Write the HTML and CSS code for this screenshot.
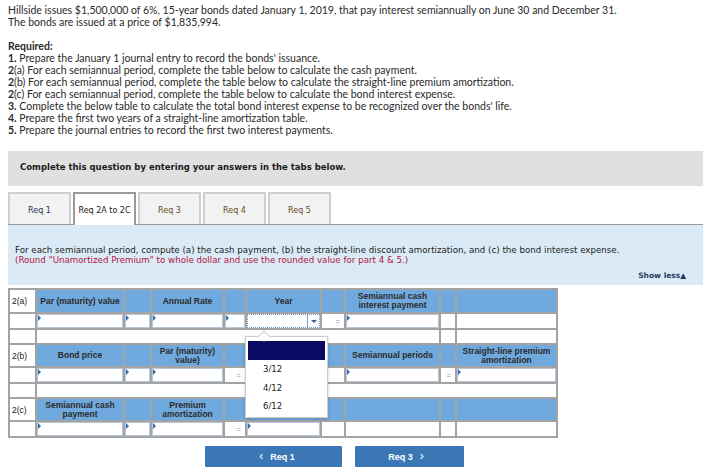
FILE: index.html
```html
<!DOCTYPE html>
<html>
<head>
<meta charset="utf-8">
<link rel="stylesheet" href="styles.css">
</head>
<body>
<div class="intro">
  <p class="line">Hillside issues $1,500,000 of 6%, 15-year bonds dated January 1, 2019, that pay interest semiannually on June 30 and December 31.</p>
  <p class="line">The bonds are issued at a price of $1,835,994.</p>
</div>
<div class="required">
  <p class="line"><b>Required:</b></p>
  <p class="line"><b>1.</b> Prepare the January 1 journal entry to record the bonds' issuance.</p>
  <p class="line"><b>2</b>(a) For each semiannual period, complete the table below to calculate the cash payment.</p>
  <p class="line"><b>2</b>(b) For each semiannual period, complete the table below to calculate the straight-line premium amortization.</p>
  <p class="line"><b>2</b>(c) For each semiannual period, complete the table below to calculate the bond interest expense.</p>
  <p class="line"><b>3.</b> Complete the below table to calculate the total bond interest expense to be recognized over the bonds' life.</p>
  <p class="line"><b>4.</b> Prepare the first two years of a straight-line amortization table.</p>
  <p class="line"><b>5.</b> Prepare the journal entries to record the first two interest payments.</p>
</div>

<div class="banner">Complete this question by entering your answers in the tabs below.</div>

<div class="tabs">
  <div class="tab done">Req 1</div>
  <div class="tab active">Req 2A to 2C</div>
  <div class="tab">Req 3</div>
  <div class="tab">Req 4</div>
  <div class="tab">Req 5</div>
</div>

<div class="panel">
  <p class="inst">For each semiannual period, compute (a) the cash payment, (b) the straight-line discount amortization, and (c) the bond interest expense.</p>
  <p class="inst red">(Round "Unamortized Premium" to whole dollar and use the rounded value for part 4 &amp; 5.)</p>
  <div class="showless">Show less&#9650;</div>
</div>

<div class="tablewrap">
  <table class="grid">
    <colgroup>
      <col class="w-lab"><col class="w-c1"><col class="w-c2"><col class="w-c3"><col class="w-c4"><col class="w-c5"><col class="w-c6"><col class="w-c7"><col class="w-c8"><col class="w-c9">
    </colgroup>
    <tr class="hrow">
      <td class="lab">2(a)</td>
      <th>Par (maturity) value</th>
      <th></th>
      <th>Annual Rate</th>
      <th></th>
      <th>Year</th>
      <th></th>
      <th>Semiannual cash<br>interest payment</th>
      <th></th>
      <th></th>
    </tr>
    <tr class="irow">
      <td></td>
      <td><div class="inp"></div></td>
      <td><div class="inp"></div></td>
      <td><div class="inp"></div></td>
      <td><div class="inp"></div></td>
      <td class="selcell"><div class="sel"><span class="arrow"></span></div></td>
      <td class="eq">=</td>
      <td><div class="inp"></div></td>
      <td></td>
      <td></td>
    </tr>
    <tr class="srow">
      <td></td>
      <td colspan="7"></td>
      <td></td>
      <td></td>
    </tr>
    <tr class="hrow">
      <td class="lab">2(b)</td>
      <th>Bond price</th>
      <th></th>
      <th>Par (maturity)<br>value)</th>
      <th></th>
      <th></th>
      <th></th>
      <th>Semiannual periods</th>
      <th></th>
      <th>Straight-line premium<br>amortization</th>
    </tr>
    <tr class="irow">
      <td></td>
      <td><div class="inp"></div></td>
      <td><div class="inp"></div></td>
      <td><div class="inp"></div></td>
      <td class="eq">=</td>
      <td></td>
      <td></td>
      <td><div class="inp"></div></td>
      <td class="eq">=</td>
      <td><div class="inp"></div></td>
    </tr>
    <tr class="srow">
      <td></td>
      <td colspan="9"></td>
    </tr>
    <tr class="hrow">
      <td class="lab">2(c)</td>
      <th>Semiannual cash<br>payment</th>
      <th></th>
      <th>Premium<br>amortization</th>
      <th></th>
      <th></th>
      <th></th>
      <th></th>
      <th></th>
      <th></th>
    </tr>
    <tr class="irow">
      <td></td>
      <td><div class="inp"></div></td>
      <td><div class="inp"></div></td>
      <td><div class="inp"></div></td>
      <td class="eq">=</td>
      <td><div class="inp"></div></td>
      <td></td>
      <td></td>
      <td></td>
      <td></td>
    </tr>
  </table>

  <div class="popup">
    <div class="opt hl"></div>
    <div class="opt">3/12</div>
    <div class="opt">4/12</div>
    <div class="opt">6/12</div>
  </div>
</div>

<div class="nav">
  <div class="btn prev"><span class="chev">&#8249;</span> Req 1</div>
  <div class="btn next">Req 3 <span class="chev">&#8250;</span></div>
</div>
</body>
</html>
```

FILE: styles.css
```css
html, body {
  margin: 0;
  padding: 0;
  background: #fff;
}
body {
  padding: 4px 7px 0 8px;
  font-family: "Lato", "Liberation Sans", sans-serif;
  color: #2a2a2a;
}
.line {
  margin: 0;
  font-size: 10.5px;
  line-height: 12px;
  white-space: nowrap;
}
.required {
  margin-top: 12px;
}
.banner {
  margin-top: 15px;
  height: 35px;
  box-sizing: border-box;
  padding: 10px 12px 0;
  background: #e0e0e0;
  font-family: "DejaVu Sans", Verdana, sans-serif;
  font-weight: bold;
  font-size: 8.5px;
  line-height: 12px;
  color: #1a1a1a;
}
.tabs {
  display: flex;
  gap: 2px;
  margin-top: 6px;
  height: 32px;
}
.tab {
  width: 63px;
  box-sizing: border-box;
  border: 2px solid #cfcfcf;
  border-bottom: none;
  background: #f2f2f2;
  font-family: "DejaVu Sans", Verdana, sans-serif;
  font-size: 8px;
  display: flex;
  align-items: center;
  justify-content: center;
  color: #6a4a24;
  padding-top: 2px;
}
.tab.done {
  color: #2b3550;
}
.tab.active {
  background: #fff;
  border-color: #9a9a9a;
  color: #1a1a1a;
  position: relative;
  z-index: 1;
  margin-bottom: -1px;
  height: 33px;
}
.panel {
  background: #daebf7;
  border-top: 1px solid #9a9a9a;
  height: 61px;
  box-sizing: border-box;
  padding: 20px 17px 0 7px;
  font-family: "DejaVu Sans", Verdana, sans-serif;
  font-size: 8.7px;
  color: #222;
}
.inst {
  margin: 0;
  line-height: 10px;
  white-space: nowrap;
}
.inst.red {
  color: #b5123e;
}
.showless {
  text-align: right;
  font-weight: bold;
  color: #1e3b5a;
  font-size: 7.5px;
  line-height: 10px;
  margin-top: 6px;
}
.tablewrap {
  position: relative;
  margin-top: 3px;
  width: 549px;
}
.grid {
  border-collapse: collapse;
  table-layout: fixed;
  width: 549px;
  font-family: "Liberation Sans", Arial, sans-serif;
}
.w-lab { width: 27px; }
.w-c1 { width: 88px; }
.w-c2 { width: 27px; }
.w-c3 { width: 73px; }
.w-c4 { width: 22px; }
.w-c5 { width: 75px; }
.w-c6 { width: 24px; }
.w-c7 { width: 95px; }
.w-c8 { width: 16px; }
.w-c9 { width: 101px; }
.grid td, .grid th {
  border: 2px solid #a3a3a3;
  padding: 0;
  background: #fff;
}
.grid th {
  background: #70a9de;
  font-weight: bold;
  font-size: 8.5px;
  line-height: 9px;
  color: #2b2b2b;
  text-align: center;
  vertical-align: middle;
}
.hrow { height: 23px; }
.hrow:first-child { height: 24px; }
.irow { height: 16px; }
.srow { height: 15px; }
.lab {
  font-size: 8.5px;
  color: #222;
  padding-left: 2px !important;
  vertical-align: middle;
}
.inp {
  height: 14px;
  box-sizing: border-box;
  border: 1px solid #b8c8d8;
  position: relative;
  margin: 0;
}
.inp::before {
  content: "";
  position: absolute;
  left: 0;
  top: 0;
  border-top: 3px solid transparent;
  border-bottom: 3px solid transparent;
  border-left: 3px solid #2f6fb5;
}
.eq {
  text-align: right;
  font-size: 8px;
  color: #9a9a9a;
  padding-right: 4px !important;
}
.selcell {
  background: #fff;
}
.sel {
  height: 14px;
  box-sizing: border-box;
  border: 1px dotted #6d9bd0;
  position: relative;
}
.arrow {
  position: absolute;
  right: 0;
  top: 0;
  width: 11px;
  height: 12px;
  border-left: 1px solid #7fa0c8;
  background: #fff;
}
.arrow::after {
  content: "";
  position: absolute;
  left: 3px;
  top: 5px;
  border-left: 3px solid transparent;
  border-right: 3px solid transparent;
  border-top: 3px solid #3a5f93;
}
.popup {
  position: absolute;
  left: 237px;
  top: 48px;
  width: 83px;
  height: 82px;
  box-sizing: border-box;
  background: #fff;
  border: 1px solid #cfcfcf;
  box-shadow: 0 1px 3px rgba(0,0,0,0.2);
  padding: 4px 2px 0 2px;
  font-family: "DejaVu Sans", Verdana, sans-serif;
  font-size: 8.5px;
  color: #222;
  z-index: 2;
}
.popup::before {
  content: "";
  position: absolute;
  left: 14px;
  top: -5px;
  width: 7px;
  height: 7px;
  background: #fff;
  border-left: 1px solid #cfcfcf;
  border-top: 1px solid #cfcfcf;
  transform: rotate(45deg);
}
.opt {
  height: 18.5px;
  line-height: 18.5px;
  padding-left: 15px;
}
.opt.hl {
  background: #0b0a63;
  height: 19px;
}
.nav {
  display: flex;
  gap: 13px;
  margin-top: 8px;
  margin-left: 197px;
}
.btn {
  height: 21px;
  background: #3b77b5;
  color: #fff;
  font-family: "Liberation Sans", Arial, sans-serif;
  font-weight: bold;
  font-size: 9px;
  display: flex;
  align-items: center;
  justify-content: center;
  border-radius: 1px;
}
.btn.prev { width: 137px; }
.btn.next { width: 109px; }
.chev {
  font-size: 12px;
  font-weight: normal;
  margin: 0 7px;
  position: relative;
  top: -1px;
}
```
